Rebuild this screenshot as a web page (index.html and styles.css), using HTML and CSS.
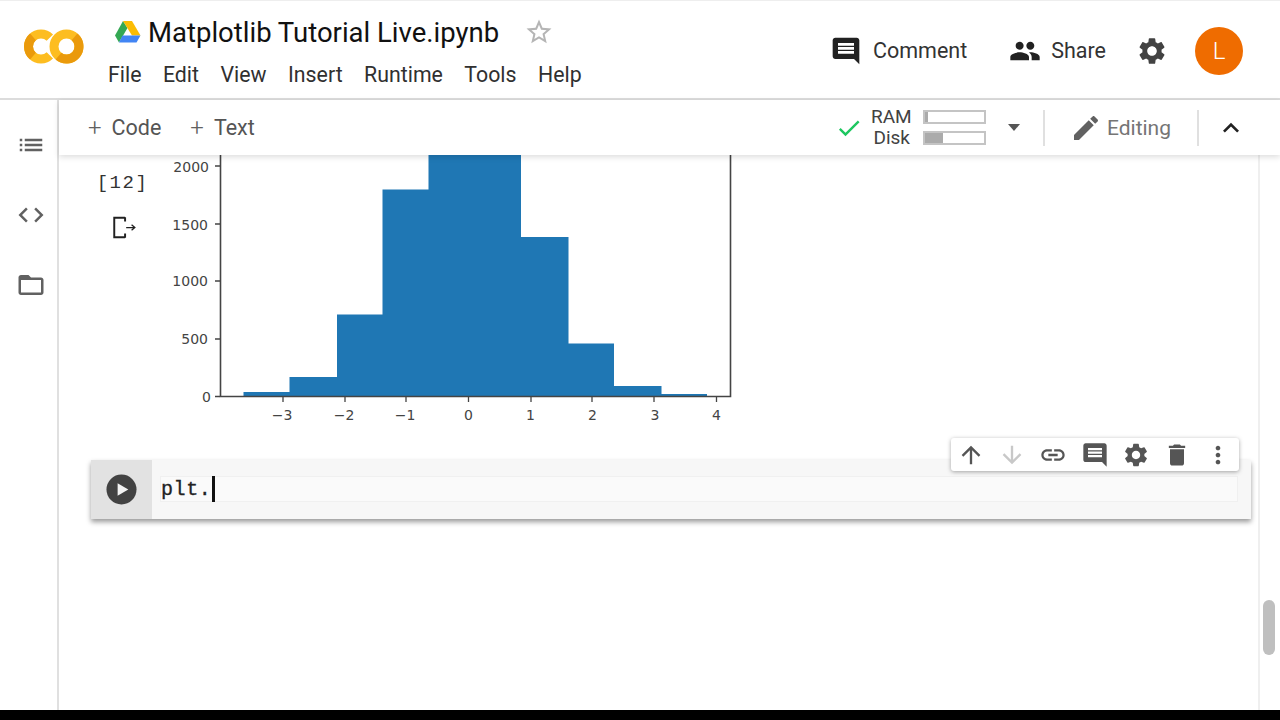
FILE: index.html
```html
<!DOCTYPE html>
<html lang="en">
<head>
<meta charset="utf-8">
<title>Matplotlib Tutorial Live.ipynb</title>
<link rel="stylesheet" href="styles.css">
</head>
<body>
<header class="header">
  <svg class="logo" viewBox="0 0 62 36" aria-hidden="true">
    <path class="ring-light" d="M26.840 8.660A12.500 12.500 0 1 0 26.840 26.340"/>
    <path class="ring-dark" d="M9.970 7.920A12.500 12.500 0 0 0 9.970 27.080"/>
    <circle class="ring-light" cx="43.500" cy="17.500" r="12.500"/>
    <path class="ring-dark" d="M51.530 7.920A12.500 12.500 0 0 1 35.470 27.080"/>
  </svg>
  <div class="doc">
    <div class="doc-title">
      <svg class="drive" viewBox="0 0 26 22" aria-hidden="true">
        <polygon fill="#34a853" points="8,0 0,14.500 4,21.500 12.500,7"/>
        <polygon fill="#fbbc04" points="8,0 17,0 25.500,14.500 17,14.500"/>
        <polygon fill="#4285f4" points="7.500,14.500 25.500,14.500 21.500,21.500 4,21.500"/>
      </svg>
      <span class="title-text">Matplotlib Tutorial Live.ipynb</span>
      <svg class="star" viewBox="0 0 24 24" aria-hidden="true"><path d="M22 9.24l-7.19-.62L12 2 9.19 8.63 2 9.24l5.46 4.73L5.820 21 12 17.27 18.180 21l-1.630-7.030L22 9.240zM12 15.400l-3.760 2.270 1-4.280-3.320-2.880 4.380-.38L12 6.100l1.710 4.040 4.380.38-3.320 2.880 1 4.280L12 15.400z"/></svg>
    </div>
    <nav class="menu">
      <span>File</span><span>Edit</span><span>View</span><span>Insert</span><span>Runtime</span><span>Tools</span><span>Help</span>
    </nav>
  </div>
  <div class="actions">
    <svg class="icon32 dark" viewBox="0 0 24 24" aria-hidden="true"><path d="M21.990 4c0-1.100-.89-2-1.990-2H4c-1.100 0-2 .9-2 2v12c0 1.100.9 2 2 2h14l4 4-.01-18zM18 14H6v-2h12v2zm0-3H6V9h12v2zm0-3H6V6h12v2z"/></svg>
    <span class="action-label comment-label">Comment</span>
    <svg class="icon32 dark" viewBox="0 0 24 24" aria-hidden="true"><path d="M16 11c1.660 0 2.990-1.340 2.990-3S17.660 5 16 5c-1.660 0-3 1.340-3 3s1.340 3 3 3zm-8 0c1.660 0 2.990-1.340 2.990-3S9.660 5 8 5C6.340 5 5 6.340 5 8s1.340 3 3 3zm0 2c-2.330 0-7 1.170-7 3.500V19h14v-2.500c0-2.330-4.670-3.500-7-3.500zm8 0c-.29 0-.62.02-.97.05 1.160.84 1.970 1.970 1.970 3.450V19h6v-2.500c0-2.330-4.670-3.500-7-3.500z"/></svg>
    <span class="action-label share-label">Share</span>
    <svg class="icon32 gear" viewBox="0 0 24 24" aria-hidden="true"><path d="M19.140 12.940c.04-.3.06-.61.06-.94 0-.32-.02-.64-.07-.94l2.030-1.580c.18-.14.23-.41.12-.61l-1.920-3.320c-.12-.22-.37-.29-.59-.22l-2.390.96c-.5-.38-1.030-.7-1.620-.94l-.36-2.540c-.04-.24-.24-.41-.48-.41h-3.840c-.24 0-.43.17-.47.41l-.36 2.540c-.59.24-1.130.57-1.620.94l-2.390-.96c-.22-.08-.47 0-.59.22L2.740 8.870c-.12.21-.08.47.12.61l2.030 1.580c-.05.3-.09.63-.09.94s.02.64.07.94l-2.030 1.580c-.18.14-.23.41-.12.61l1.920 3.320c.12.22.37.29.59.22l2.390-.96c.5.38 1.030.7 1.620.94l.36 2.540c.05.24.24.41.48.41h3.840c.24 0 .44-.17.47-.41l.36-2.540c.59-.24 1.130-.56 1.620-.94l2.390.96c.22.08.47 0 .59-.22l1.920-3.320c.12-.22.07-.47-.12-.61l-2.010-1.580zM12 15.600c-1.980 0-3.600-1.620-3.600-3.600s1.620-3.600 3.600-3.600 3.600 1.620 3.600 3.600-1.620 3.600-3.600 3.600z"/></svg>
    <div class="avatar">L</div>
  </div>
</header>

<div class="main">
  <aside class="sidebar">
    <svg class="side-icon" viewBox="0 0 24 24" aria-hidden="true"><path d="M3 7h2v2H3zM7 7h14v2H7zM3 11h2v2H3zM7 11h14v2H7zM3 15h2v2H3zM7 15h14v2H7z"/></svg>
    <svg class="side-icon" viewBox="0 0 24 24" aria-hidden="true"><path d="M9.400 16.600L4.800 12l4.600-4.600L8 6l-6 6 6 6 1.400-1.400zm5.200 0l4.600-4.600-4.600-4.600L16 6l6 6-6 6-1.400-1.400z"/></svg>
    <svg class="side-icon" viewBox="0 0 24 24" aria-hidden="true"><path d="M20 6h-8l-2-2H4c-1.100 0-1.990.9-1.990 2L2 18c0 1.100.9 2 2 2h16c1.100 0 2-.9 2-2V8c0-1.100-.9-2-2-2zm0 12H4V8h16v10z"/></svg>
  </aside>

  <div class="workspace">
    <div class="toolbar">
      <span class="add add-code"><span class="plus">+</span>Code</span>
      <span class="add"><span class="plus">+</span>Text</span>
      <div class="status">
        <svg class="check" viewBox="0 0 24 24" aria-hidden="true"><path d="M9 16.170L4.830 12l-1.410 1.410L9 19 21 7l-1.410-1.410z"/></svg>
        <div class="meters">
          <span class="meter-label">RAM</span><span class="meter"><span class="meter-fill ram"></span></span>
          <span class="meter-label">Disk</span><span class="meter"><span class="meter-fill disk"></span></span>
        </div>
        <span class="caret"></span>
        <span class="divider"></span>
        <svg class="pencil" viewBox="0 0 24 24" aria-hidden="true"><path d="M3 17.250V21h3.750L17.810 9.940l-3.750-3.750L3 17.250zM20.710 7.040c.39-.39.39-1.020 0-1.410l-2.340-2.340c-.39-.39-1.020-.39-1.410 0l-1.830 1.830 3.750 3.750 1.830-1.830z"/></svg>
        <span class="editing">Editing</span>
        <span class="divider divider-end"></span>
        <svg class="chevron" viewBox="0 0 24 24" aria-hidden="true"><path d="M12 8l-6 6 1.410 1.410L12 10.830l4.590 4.580L18 14z"/></svg>
      </div>
    </div>

    <div class="scroller">
      <div class="notebook">
        <div class="output-row">
          <div class="output-gutter">
            <span class="exec-count">[12]</span>
            <svg class="output-icon" viewBox="0 0 24 24" aria-hidden="true">
              <path d="M13 3.500H3v18h10M13 3v4M13 22v-4" fill="none" stroke="#212121" stroke-width="1.800"/>
              <path d="M14 12.500h8M19 10l3 2.500-3 2.500" fill="none" stroke="#212121" stroke-width="1.200"/>
            </svg>
          </div>
          <svg class="chart" viewBox="159 155 600 285" role="img">
            <path fill="#1f77b4" d="M243.500 396V392H289.500V377H337V314.500H382.500V189.500H428.500V155H521V237H568.500V343.500H614V386H661.500V394H707V396Z"/>
            <path class="axis" d="M220.500 155V396.500H730.500V155"/>
            <path class="tick" d="M215 166H220M215 224H220M215 281H220M215 339H220M215 396.500H220M283 397V402M345 397V402M406 397V402M468.500 397V402M531 397V402M592 397V402M654 397V402M716.500 397V402"/>
            <g class="ylabels">
              <text x="209" y="172">2000</text>
              <text x="208" y="230">1500</text>
              <text x="208" y="286">1000</text>
              <text x="208" y="344">500</text>
              <text x="211" y="402">0</text>
            </g>
            <g class="xlabels">
              <text x="282" y="420">−3</text>
              <text x="344" y="420">−2</text>
              <text x="405" y="420">−1</text>
              <text x="468.500" y="420">0</text>
              <text x="530.500" y="420">1</text>
              <text x="592.500" y="420">2</text>
              <text x="655" y="420">3</text>
              <text x="716.500" y="420">4</text>
            </g>
          </svg>
        </div>

        <div class="cell">
          <div class="cell-gutter">
            <svg class="run" viewBox="0 0 32 32" aria-hidden="true"><circle cx="16" cy="16" r="15.500" fill="#424242"/><polygon fill="#f2f2f2" points="12,9.500 23,16 12,22.500"/></svg>
          </div>
          <div class="editor-wrap">
            <div class="editor"><span class="code">plt.</span><span class="cursor"></span></div>
          </div>
          <div class="cell-tools">
            <svg class="tool" viewBox="0 0 24 24" aria-hidden="true"><path d="M4 12l1.410 1.410L11 7.830V20h2V7.830l5.580 5.590L20 12l-8-8-8 8z"/></svg>
            <svg class="tool tool-off" viewBox="0 0 24 24" aria-hidden="true"><path d="M20 12l-1.410-1.410L13 16.170V4h-2v12.170l-5.580-5.590L4 12l8 8 8-8z"/></svg>
            <svg class="tool" viewBox="0 0 24 24" aria-hidden="true"><path d="M3.900 12c0-1.710 1.390-3.100 3.100-3.100h4V7H7c-2.760 0-5 2.240-5 5s2.240 5 5 5h4v-1.900H7c-1.710 0-3.100-1.390-3.100-3.100zM8 13h8v-2H8v2zm9-6h-4v1.900h4c1.710 0 3.100 1.390 3.100 3.100s-1.390 3.100-3.100 3.100h-4V17h4c2.760 0 5-2.240 5-5s-2.240-5-5-5z"/></svg>
            <svg class="tool" viewBox="0 0 24 24" aria-hidden="true"><path d="M21.990 4c0-1.100-.89-2-1.990-2H4c-1.100 0-2 .9-2 2v12c0 1.100.9 2 2 2h14l4 4-.01-18zM18 14H6v-2h12v2zm0-3H6V9h12v2zm0-3H6V6h12v2z"/></svg>
            <svg class="tool" viewBox="0 0 24 24" aria-hidden="true"><path d="M19.140 12.940c.04-.3.06-.61.06-.94 0-.32-.02-.64-.07-.94l2.030-1.580c.18-.14.23-.41.12-.61l-1.920-3.320c-.12-.22-.37-.29-.59-.22l-2.390.96c-.5-.38-1.030-.7-1.620-.94l-.36-2.540c-.04-.24-.24-.41-.48-.41h-3.840c-.24 0-.43.17-.47.41l-.36 2.540c-.59.24-1.130.57-1.620.94l-2.390-.96c-.22-.08-.47 0-.59.22L2.740 8.870c-.12.21-.08.47.12.61l2.030 1.580c-.05.3-.09.63-.09.94s.02.64.07.94l-2.030 1.580c-.18.14-.23.41-.12.61l1.920 3.320c.12.22.37.29.59.22l2.390-.96c.5.38 1.030.7 1.620.94l.36 2.540c.05.24.24.41.48.41h3.840c.24 0 .44-.17.47-.41l.36-2.540c.59-.24 1.130-.56 1.620-.94l2.390.96c.22.08.47 0 .59-.22l1.920-3.320c.12-.22.07-.47-.12-.61l-2.010-1.580zM12 15.600c-1.980 0-3.600-1.620-3.600-3.600s1.620-3.600 3.600-3.600 3.600 1.620 3.600 3.600-1.620 3.600-3.600 3.600z"/></svg>
            <svg class="tool" viewBox="0 0 24 24" aria-hidden="true"><path d="M6 19c0 1.100.9 2 2 2h8c1.100 0 2-.9 2-2V7H6v12zM19 4h-3.500l-1-1h-5l-1 1H5v2h14V4z"/></svg>
            <svg class="tool" viewBox="0 0 24 24" aria-hidden="true"><path d="M12 8c1.100 0 2-.9 2-2s-.9-2-2-2-2 .9-2 2 .9 2 2 2zm0 2c-1.100 0-2 .9-2 2s.9 2 2 2 2-.9 2-2-.9-2-2-2zm0 6c-1.100 0-2 .9-2 2s.9 2 2 2 2-.9 2-2-.9-2-2-2z"/></svg>
          </div>
        </div>
      </div>
      <div class="scrollbar"><span class="thumb"></span></div>
    </div>
  </div>
</div>
<div class="letterbox"></div>
</body>
</html>
```

FILE: styles.css
```css
* { box-sizing: border-box; }
html, body { margin: 0; height: 100%; }
body {
  width: 1280px;
  height: 720px;
  display: flex;
  flex-direction: column;
  overflow: hidden;
  background: #fff;
  color: #212121;
  font-family: Roboto, "Noto Sans", sans-serif;
}

/* Header */
.header {
  flex: 0 0 100px;
  display: flex;
  border-top: 1px solid #eeeeee;
  border-bottom: 2px solid #dcdcdc;
}
.logo { width: 62px; height: 36px; margin: 28px 0 0 23px; flex: none; }
.ring-dark, .ring-light { fill: none; stroke-width: 9; }
.ring-dark { stroke: #ea9a0c; }
.ring-light { stroke: #fdbd20; }
.doc { margin-left: 23px; }
.doc-title { display: flex; align-items: center; height: 32px; margin-top: 15px; }
.drive { width: 26px; height: 22px; margin-left: 7px; flex: none; }
.title-text { margin-left: 7px; font-size: 27.500px; color: #111; white-space: nowrap; }
.star { width: 30px; height: 30px; margin-left: 25px; fill: #b5b5b5; }
.menu { display: flex; gap: 21.500px; margin-top: 13px; font-size: 21.300px; line-height: 28px; color: #303030; }
.actions { display: flex; align-items: center; margin-left: auto; padding: 2px 37px 0 0; height: 97px; }
.icon32 { width: 32px; height: 32px; flex: none; }
.dark { fill: #212121; }
.gear { fill: #424242; margin-left: 30px; }
.action-label { font-size: 21.500px; color: #333; }
.comment-label { margin: 0 42px 0 11px; }
.share-label { margin-left: 10px; }
.avatar {
  width: 48px; height: 48px; margin: 1px 0 0 27px;
  border-radius: 50%;
  background: #ef6c00;
  color: #fff;
  font-size: 24px;
  font-weight: 300;
  display: flex; align-items: center; justify-content: center;
}

/* Main */
.main { flex: 1; display: flex; min-height: 0; }
.sidebar {
  flex: 0 0 59px;
  display: flex; flex-direction: column; align-items: center;
  gap: 40px;
  padding: 30px 0 0 4px;
  border-right: 2px solid #e0e0e0;
}
.side-icon { width: 30px; height: 30px; fill: #616161; flex: none; }
.workspace { flex: 1; display: flex; flex-direction: column; min-width: 0; }

/* Toolbar */
.toolbar {
  flex: 0 0 55px;
  display: flex; align-items: center;
  padding-left: 29px;
  position: relative; z-index: 2;
  box-shadow: 0 2px 6px rgba(0,0,0,.14);
  background: #fff;
  font-size: 21.500px;
  color: #555;
}
.add { display: flex; align-items: center; }
.add-code { margin-right: 29px; }
.plus { font-size: 24px; font-weight: 300; margin-right: 10px; color: #616161; }
.status { margin-left: auto; display: flex; align-items: center; height: 100%; padding-right: 33px; }
.check { width: 28px; height: 28px; fill: #1ec760; }
.meters {
  display: grid;
  grid-template-columns: 39px 63px;
  column-gap: 13px;
  align-items: center;
  row-gap: 3px;
  margin-left: 8px;
  font-size: 19px;
  line-height: 18px;
  color: #424242;
}
.meter-label { text-align: right; }
.meter { height: 14px; border: 2px solid #c4c4c4; display: block; background: #fff; }
.meter-fill { display: block; height: 100%; background: #ababab; }
.ram { width: 5%; }
.disk { width: 30%; }
.caret {
  width: 0; height: 0; margin-left: 22px;
  border-left: 6px solid transparent;
  border-right: 6px solid transparent;
  border-top: 7px solid #555;
}
.divider { width: 2px; height: 36px; background: #e0e0e0; margin-left: 23px; }
.pencil { width: 32px; height: 32px; fill: #616161; margin-left: 25px; }
.editing { font-size: 21px; color: #757575; margin-left: 5px; }
.divider-end { margin-left: 26px; }
.chevron { width: 32px; height: 32px; fill: #212121; margin-left: 16px; }

/* Notebook */
.scroller { flex: 1; display: flex; min-height: 0; }
.notebook { flex: 1; min-width: 0; }
.output-row { display: flex; height: 285px; }
.output-gutter { flex: 0 0 100px; display: flex; flex-direction: column; align-items: center; }
.exec-count { font-family: "Liberation Mono", monospace; font-size: 19px; letter-spacing: 1.500px; margin: 17px 0 0 27px; color: #333; line-height: 22px; white-space: nowrap; }
.output-icon { width: 26px; height: 26px; margin: 20px 0 0 29px; }
.chart { width: 600px; height: 285px; flex: none; }
.axis { fill: none; stroke: #444; stroke-width: 1.600; }
.tick { fill: none; stroke: #444; stroke-width: 1.300; }
.ylabels text, .xlabels text { font-family: "DejaVu Sans", sans-serif; font-size: 14px; fill: #444; }
.ylabels text { text-anchor: end; }
.xlabels text { text-anchor: middle; }

.cell {
  position: relative;
  margin: 20px 0 0 32px;
  width: 1160px;
  height: 59px;
  display: flex;
  background: #f7f7f7;
  box-shadow: 0 3px 5px rgba(0,0,0,.4);
}
.cell-gutter { flex: 0 0 61px; background: #e2e2e2; display: flex; align-items: center; justify-content: center; }
.run { width: 31px; height: 31px; }
.editor-wrap { flex: 1; padding: 16px 13px 17px 8px; }
.editor {
  height: 26px;
  background: #fafafa;
  border: 1px solid #f0f0f0;
  display: flex; align-items: center;
}
.code { font-family: "Liberation Mono", monospace; font-size: 20px; color: #222; letter-spacing: .6px; -webkit-text-stroke: .3px #222; }
.cursor { width: 3px; height: 26px; margin-left: 1px; background: #111; }
.cell-tools {
  position: absolute;
  top: -22px;
  right: 12px;
  width: 288px;
  height: 33px;
  display: flex; align-items: center;
  gap: 13.200px;
  padding-left: 6px;
  background: #fff;
  border-radius: 3px;
  box-shadow: 0 1px 4px rgba(0,0,0,.35);
}
.tool { width: 28px; height: 28px; fill: #555; flex: none; }
.tool-off { fill: #c8c8c8; }
.scrollbar { flex: 0 0 22px; border-left: 2px solid #efefef; padding: 445px 0 0 3px; }
.thumb { display: block; width: 12px; height: 55px; border-radius: 6px; background: #bfbfbf; }
.letterbox { flex: 0 0 10px; background: #000; }
```
